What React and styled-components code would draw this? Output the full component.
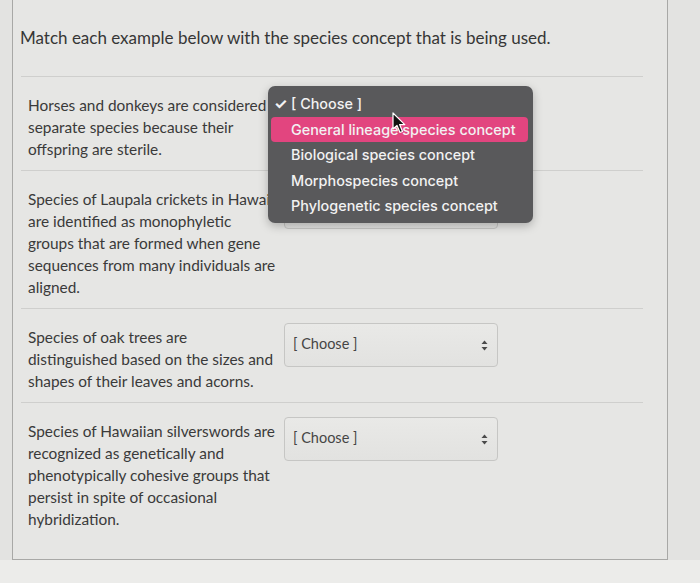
import React from 'react'
import styled, { createGlobalStyle } from 'styled-components'

const GlobalStyle = createGlobalStyle`
  html, body {
    margin: 0;
    padding: 0;
    background: #e3e3e1;
  }
  body {
    font-family: Lato, "Open Sans", sans-serif;
    color: #3b3b3b;
  }
`

// lines are kept as the page breaks them
const examples = [
  ['Horses and donkeys are considered', 'separate species because their', 'offspring are sterile.'],
  ['Species of Laupala crickets in Hawaii', 'are identified as monophyletic', 'groups that are formed when gene', 'sequences from many individuals are', 'aligned.'],
  ['Species of oak trees are', 'distinguished based on the sizes and', 'shapes of their leaves and acorns.'],
  ['Species of Hawaiian silverswords are', 'recognized as genetically and', 'phenotypically cohesive groups that', 'persist in spite of occasional', 'hybridization.'],
]

const options = [
  'General lineage species concept',
  'Biological species concept',
  'Morphospecies concept',
  'Phylogenetic species concept',
]

export default function App() {
  return (
    <>
      <GlobalStyle />
      <Page>
        <Card>
          <Title>Match each example below with the species concept that is being used.</Title>
          <Divider />
          {examples.map((lines, i) => (
            <React.Fragment key={i}>
              <Row>
                <Prompt>
                  {lines.map(l => <Line key={l}>{l}</Line>)}
                </Prompt>
                <SelectWrap>
                  <Select>
                    <span>[ Choose ]</span>
                    <Arrows />
                  </Select>
                  {i === 0 && <Menu />}
                </SelectWrap>
              </Row>
              {i < examples.length - 1 && <Divider />}
            </React.Fragment>
          ))}
        </Card>
      </Page>
      <Below />
    </>
  )
}

function Arrows() {
  return (
    <svg width="7" height="11" viewBox="0 0 7 11">
      <path d="M3.5 0.5 L6.5 4 L0.5 4 Z" fill="#4a4a4a" />
      <path d="M3.5 10.5 L6.5 7 L0.5 7 Z" fill="#4a4a4a" />
    </svg>
  )
}

function Menu() {
  return (
    <MenuBox>
      <MenuItem>
        <Check>✓</Check>[ Choose ]
      </MenuItem>
      {options.map((opt, i) => (
        <MenuItem key={opt} active={i === 0}>{opt}</MenuItem>
      ))}
      <Cursor width="14" height="22" viewBox="0 0 14 22">
        <path d="M1 1 L1 17 L5 13.5 L8 20.5 L10.5 19.5 L7.6 12.6 L12.8 12.6 Z" fill="#111" stroke="#fff" strokeWidth="1.2" strokeLinejoin="round" />
      </Cursor>
    </MenuBox>
  )
}

const Page = styled.div`
  padding-left: 12px;
  width: 656px;
`

const Card = styled.div`
  height: 560px;
  box-sizing: border-box;
  border: 1px solid #a8a8a6;
  border-top: none;
  background: #e6e6e4;
  padding: 0 24px 0 7px;
`

const Title = styled.div`
  padding-top: 27px;
  padding-bottom: 27px;
  font-size: 17px;
  line-height: 22px;
  color: #363636;
`

const Divider = styled.div`
  height: 1px;
  margin-left: 1px;
  background: #cfcfcd;
`

const Row = styled.div`
  display: flex;
  align-items: flex-start;
  padding: 17px 0 10px 8px;
`

const Prompt = styled.div`
  width: 252px;
  font-size: 15.4px;
  line-height: 22px;
  color: #3a3a3a;
`

const Line = styled.div`
  white-space: nowrap;
`

const SelectWrap = styled.div`
  position: relative;
  margin-left: 4px;
  margin-top: -3px;
`

const Select = styled.div`
  width: 214px;
  height: 44px;
  box-sizing: border-box;
  display: flex;
  align-items: center;
  justify-content: space-between;
  padding: 0 9px 0 8px;
  border: 1px solid #c6c6c4;
  border-radius: 4px;
  background: linear-gradient(#e9e9e7, #e2e2e0);
  font-size: 14.5px;
  color: #454545;
  span {
    margin-top: -4px;
  }
`

const MenuBox = styled.div`
  position: absolute;
  z-index: 2;
  left: -16px;
  top: -5px;
  width: 265px;
  box-sizing: border-box;
  padding: 5px 5px 4px 3px;
  background: #59595b;
  border-radius: 7px;
  box-shadow: 0 3px 10px rgba(0, 0, 0, 0.25);
  font-family: Inter, "Noto Sans", sans-serif;
  font-weight: 500;
  font-size: 14.4px;
  color: #f2f2f2;
`

const MenuItem = styled.div`
  position: relative;
  height: 25.5px;
  line-height: 25.5px;
  padding-left: 20px;
  border-radius: 4px;
  background: ${props => props.active ? '#e2457f' : 'transparent'};
`

const Check = styled.span`
  position: absolute;
  left: 3px;
  font-size: 15px;
  font-weight: 700;
`

const Cursor = styled.svg`
  position: absolute;
  left: 124px;
  top: 26px;
`

const Below = styled.div`
  height: 23px;
  background: #ececea;
`
